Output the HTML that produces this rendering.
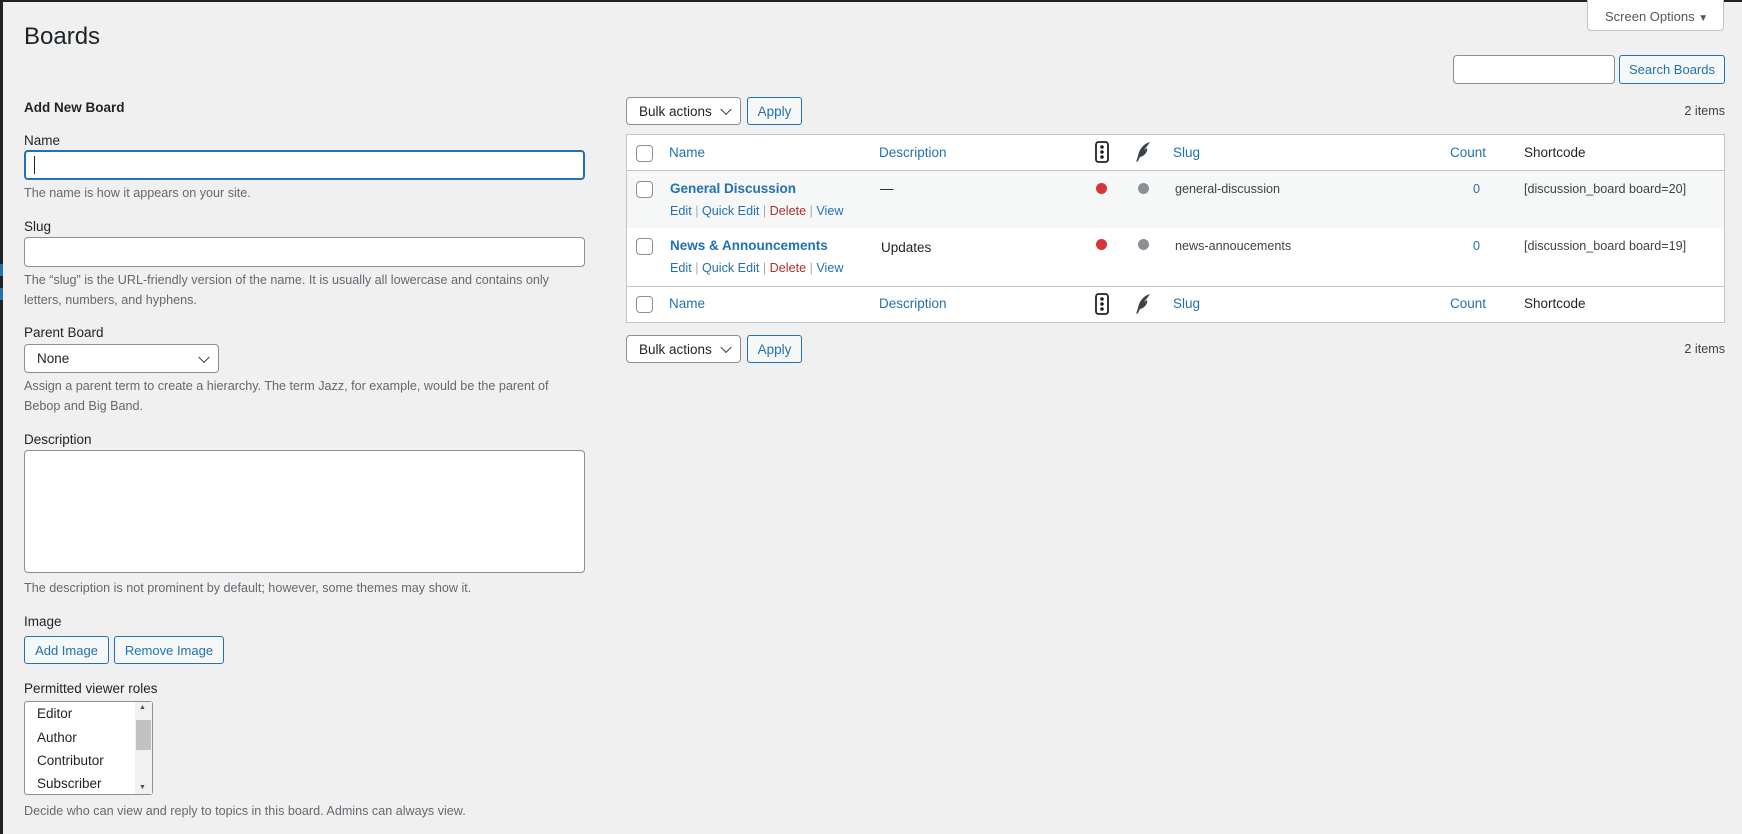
<!DOCTYPE html>
<html><head><meta charset="utf-8"><style>
*{box-sizing:border-box}
body{margin:0;width:1742px;height:834px;background:#f0f0f1;font-family:"Liberation Sans",Arial,sans-serif;font-size:13.5px;color:#1d2327;position:relative;overflow:hidden}
.a{position:absolute;white-space:nowrap}
.inp{position:absolute;background:#fff;border:1px solid #8c8f94;border-radius:4px}
.btn{position:absolute;background:#f6f7f7;border:1px solid #2271b1;color:#2271b1;border-radius:3px;font-size:13.5px;display:flex;align-items:center;justify-content:center}
.sel{position:absolute;background:#fff;border:1px solid #8c8f94;border-radius:4px;font-size:13.5px;padding-left:12px;display:flex;align-items:center}
.chev{position:absolute;right:10px;top:50%;width:8px;height:8px;border-right:1.6px solid #2c3338;border-bottom:1.6px solid #2c3338;transform:translateY(-70%) rotate(45deg)}
.help{color:#646970;font-size:12.6px}
.lnk{color:#2271b1}
.cb{position:absolute;width:17px;height:17px;border:1px solid #8c8f94;border-radius:4px;background:#fff}
.dot{position:absolute;width:11px;height:11px;border-radius:50%}
</style></head><body>
<div class="a" style="left:0;top:0;width:1742px;height:2px;background:#1d2327"></div>
<div class="a" style="left:0;top:0;width:3px;height:834px;background:#1d2327"></div>
<div class="a" style="left:0;top:264px;width:3px;height:12px;background:#2271b1"></div>
<div class="a" style="left:0;top:288px;width:3px;height:12px;background:#2271b1"></div>

<div class="a" style="left:24px;top:23px;font-size:24px;">Boards</div>

<div class="a" style="left:1587px;top:-2px;width:137px;height:33px;background:#fff;border:1px solid #c3c4c7;border-radius:0 0 4px 4px;color:#50575e;font-size:13px;padding:10px 0 0 17px">Screen Options <span style="font-size:10px">&#9660;</span></div>
<div class="inp" style="left:1453px;top:55px;width:162px;height:29px"></div>
<div class="btn" style="left:1619px;top:55px;width:106px;height:29px;font-size:13px">Search Boards</div>

<div class="a" style="left:24px;top:100px;font-weight:bold;font-size:13.5px">Add New Board</div>
<div class="a" style="left:24px;top:133px">Name</div>
<div class="inp" style="left:24px;top:150px;width:561px;height:30px;border:2px solid #2271b1"></div>
<div class="a" style="left:34px;top:156px;width:1px;height:18px;background:#1d2327"></div>
<div class="a help" style="left:24px;top:186px">The name is how it appears on your site.</div>
<div class="a" style="left:24px;top:219px">Slug</div>
<div class="inp" style="left:24px;top:237px;width:561px;height:30px"></div>
<div class="a help" style="left:24px;top:273px">The “slug” is the URL-friendly version of the name. It is usually all lowercase and contains only</div>
<div class="a help" style="left:24px;top:293px">letters, numbers, and hyphens.</div>
<div class="a" style="left:24px;top:325px">Parent Board</div>
<div class="sel" style="left:24px;top:344px;width:195px;height:29px">None<span class="chev"></span></div>
<div class="a help" style="left:24px;top:379px">Assign a parent term to create a hierarchy. The term Jazz, for example, would be the parent of</div>
<div class="a help" style="left:24px;top:399px">Bebop and Big Band.</div>
<div class="a" style="left:24px;top:432px">Description</div>
<div class="inp" style="left:24px;top:450px;width:561px;height:123px"></div>
<div class="a help" style="left:24px;top:581px">The description is not prominent by default; however, some themes may show it.</div>
<div class="a" style="left:24px;top:614px">Image</div>
<div class="btn" style="left:24px;top:636px;width:85px;height:28px;font-size:13px">Add Image</div>
<div class="btn" style="left:114px;top:636px;width:110px;height:28px;font-size:13px">Remove Image</div>
<div class="a" style="left:24px;top:681px">Permitted viewer roles</div>
<div class="a" style="left:24px;top:701px;width:129px;height:94px;background:#fff;border:1px solid #8c8f94;border-radius:3px"></div>
<div class="a" style="left:135px;top:702px;width:17px;height:92px;background:#f1f1f1"></div>
<div class="a" style="left:136px;top:720px;width:15px;height:30px;background:#c1c1c1"></div>
<div class="a" style="left:139px;top:704px;font-size:7px;color:#505050">&#9650;</div>
<div class="a" style="left:139px;top:784px;font-size:7px;color:#505050">&#9660;</div>
<div class="a" style="left:37px;top:706px">Editor</div>
<div class="a" style="left:37px;top:730px">Author</div>
<div class="a" style="left:37px;top:753px">Contributor</div>
<div class="a" style="left:37px;top:776px">Subscriber</div>
<div class="a help" style="left:24px;top:804px">Decide who can view and reply to topics in this board. Admins can always view.</div>

<div class="sel" style="left:626px;top:97px;width:115px;height:28px">Bulk actions<span class="chev"></span></div>
<div class="btn" style="left:747px;top:97px;width:55px;height:28px">Apply</div>
<div class="a" style="right:17px;top:104px;font-size:12.6px;color:#3c434a">2 items</div>

<div class="a" style="left:626px;top:134px;width:1099px;height:189px;background:#fff;border:1px solid #c3c4c7"></div>
<div class="a" style="left:627px;top:170px;width:1097px;height:1px;background:#c3c4c7"></div>
<div class="a" style="left:627px;top:171px;width:1097px;height:57px;background:#f6f7f7"></div>
<div class="a" style="left:627px;top:286px;width:1097px;height:1px;background:#c3c4c7"></div>

<div class="cb" style="left:636px;top:145px"></div>
<div class="a lnk" style="left:669px;top:145px">Name</div>
<div class="a lnk" style="left:879px;top:145px">Description</div>
<svg class="a" style="left:1095px;top:141px" width="14" height="22" viewBox="0 0 14 22"><rect x="1" y="1" width="12" height="20" rx="2.5" fill="none" stroke="#1d2327" stroke-width="1.8"/><circle cx="7" cy="6" r="1.8" fill="#1d2327"/><circle cx="7" cy="11" r="1.8" fill="#1d2327"/><circle cx="7" cy="16" r="1.8" fill="#1d2327"/></svg>
<svg class="a" style="left:1135px;top:141px" width="16" height="22" viewBox="0 0 16 22"><path d="M15 1C8 3 4 9 3 15L1 21L3 20L5 16C10 15 13 10 12 7L9 9L13 4Z" fill="#3c434a"/></svg>
<div class="a lnk" style="left:1173px;top:145px">Slug</div>
<div class="a lnk" style="right:256px;top:145px">Count</div>
<div class="a" style="left:1524px;top:145px">Shortcode</div>

<div class="cb" style="left:636px;top:181px"></div>
<div class="a lnk" style="left:670px;top:181px;font-weight:bold">General Discussion</div>
<div class="a" style="left:670px;top:204px;font-size:12.6px"><span class="lnk">Edit</span> <span style="color:#a7aaad">|</span> <span class="lnk">Quick Edit</span> <span style="color:#a7aaad">|</span> <span style="color:#b32d2e">Delete</span> <span style="color:#a7aaad">|</span> <span class="lnk">View</span></div>
<div class="a" style="left:880px;top:181px">—</div>
<div class="dot" style="left:1096px;top:183px;background:#d63638"></div>
<div class="dot" style="left:1138px;top:183px;background:#8c8f94"></div>
<div class="a" style="left:1175px;top:182px;font-size:12.6px;color:#3c434a">general-discussion</div>
<div class="a lnk" style="left:1473px;top:182px;font-size:12.6px">0</div>
<div class="a" style="left:1524px;top:182px;font-size:12.6px;color:#3c434a">[discussion_board board=20]</div>

<div class="cb" style="left:636px;top:238px"></div>
<div class="a lnk" style="left:670px;top:238px;font-weight:bold">News &amp; Announcements</div>
<div class="a" style="left:670px;top:261px;font-size:12.6px"><span class="lnk">Edit</span> <span style="color:#a7aaad">|</span> <span class="lnk">Quick Edit</span> <span style="color:#a7aaad">|</span> <span style="color:#b32d2e">Delete</span> <span style="color:#a7aaad">|</span> <span class="lnk">View</span></div>
<div class="a" style="left:881px;top:240px">Updates</div>
<div class="dot" style="left:1096px;top:239px;background:#d63638"></div>
<div class="dot" style="left:1138px;top:239px;background:#8c8f94"></div>
<div class="a" style="left:1175px;top:239px;font-size:12.6px;color:#3c434a">news-annoucements</div>
<div class="a lnk" style="left:1473px;top:239px;font-size:12.6px">0</div>
<div class="a" style="left:1524px;top:239px;font-size:12.6px;color:#3c434a">[discussion_board board=19]</div>

<div class="cb" style="left:636px;top:296px"></div>
<div class="a lnk" style="left:669px;top:296px">Name</div>
<div class="a lnk" style="left:879px;top:296px">Description</div>
<svg class="a" style="left:1095px;top:293px" width="14" height="22" viewBox="0 0 14 22"><rect x="1" y="1" width="12" height="20" rx="2.5" fill="none" stroke="#1d2327" stroke-width="1.8"/><circle cx="7" cy="6" r="1.8" fill="#1d2327"/><circle cx="7" cy="11" r="1.8" fill="#1d2327"/><circle cx="7" cy="16" r="1.8" fill="#1d2327"/></svg>
<svg class="a" style="left:1135px;top:293px" width="16" height="22" viewBox="0 0 16 22"><path d="M15 1C8 3 4 9 3 15L1 21L3 20L5 16C10 15 13 10 12 7L9 9L13 4Z" fill="#3c434a"/></svg>
<div class="a lnk" style="left:1173px;top:296px">Slug</div>
<div class="a lnk" style="right:256px;top:296px">Count</div>
<div class="a" style="left:1524px;top:296px">Shortcode</div>

<div class="sel" style="left:626px;top:335px;width:115px;height:28px">Bulk actions<span class="chev"></span></div>
<div class="btn" style="left:747px;top:335px;width:55px;height:28px">Apply</div>
<div class="a" style="right:17px;top:342px;font-size:12.6px;color:#3c434a">2 items</div>
</body></html>
